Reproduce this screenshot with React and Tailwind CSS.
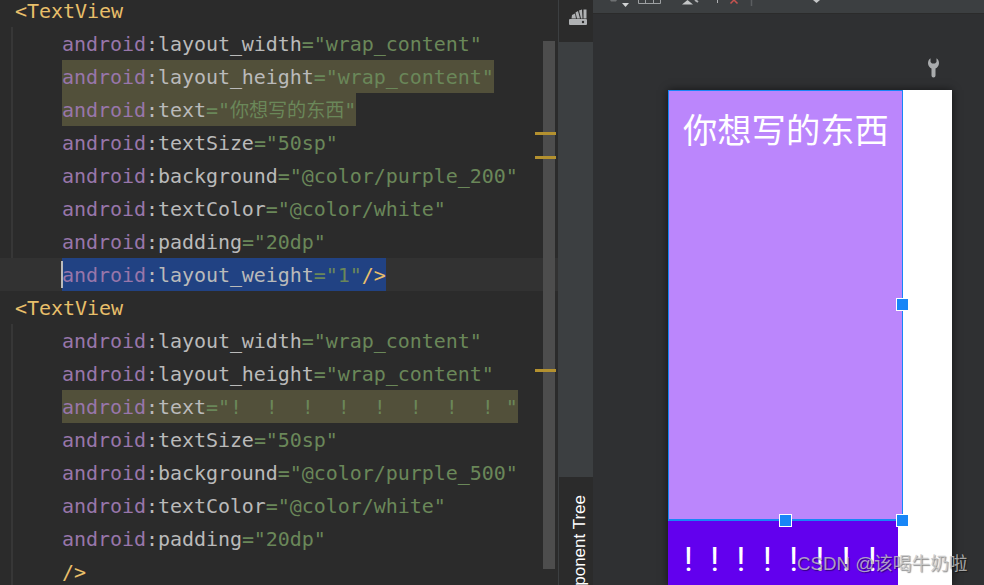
import React from "react";

const mono = "font-['DejaVu_Sans_Mono','Liberation_Mono','Noto_Sans_CJK_SC',monospace]";

const Attr = ({ name, value, tail }) => (
  <>
    <span className="text-[#9876aa]">android</span>
    <span className="text-[#bababa]">:{name}</span>
    <span className="text-[#6a8759]">="{value}"</span>
    {tail && <span className="text-[#e8bf6a]">{tail}</span>}
  </>
);

const Line = ({ children, indent = true, mark, current }) => (
  <div className={`h-[33px] leading-[35px] whitespace-pre ${current ? "bg-[#323232]" : ""} ${indent ? "pl-[62px]" : "pl-[15px]"}`}>
    {mark ? <span className={`inline-block h-[33px] align-top ${mark}`}>{children}</span> : children}
  </div>
);

const Handle = ({ className }) => (
  <div className={`absolute w-[13px] h-[13px] bg-[#1886f7] border-[1.5px] border-white ${className}`} />
);

const TextView = () => <span className="text-[#e8bf6a]">&lt;TextView</span>;

const Editor = () => (
  <div className={`relative w-[558px] h-[585px] overflow-hidden bg-[#2b2b2b] text-[20px] tracking-[-0.05px] ${mono}`}>
    <div className="-mt-[6px]">
      <Line indent={false}><TextView /></Line>
      <Line><Attr name="layout_width" value="wrap_content" /></Line>
      <Line mark="bg-[#52503a]"><Attr name="layout_height" value="wrap_content" /></Line>
      <Line mark="bg-[#52503a]">
        <span className="text-[#9876aa]">android</span>
        <span className="text-[#bababa]">:text</span>
        <span className="text-[#6a8759]">="<span className="text-[19.130px]">你想写的东西</span>"</span>
      </Line>
      <Line><Attr name="textSize" value="50sp" /></Line>
      <Line><Attr name="background" value="@color/purple_200" /></Line>
      <Line><Attr name="textColor" value="@color/white" /></Line>
      <Line><Attr name="padding" value="20dp" /></Line>
      <Line current mark="bg-[#214283]"><Attr name="layout_weight" value="1" tail="/>" /></Line>
      <Line indent={false}><TextView /></Line>
      <Line><Attr name="layout_width" value="wrap_content" /></Line>
      <Line><Attr name="layout_height" value="wrap_content" /></Line>
      <Line mark="bg-[#52503a]"><Attr name="text" value="!  !  !  !  !  !  !  ! " /></Line>
      <Line><Attr name="textSize" value="50sp" /></Line>
      <Line><Attr name="background" value="@color/purple_500" /></Line>
      <Line><Attr name="textColor" value="@color/white" /></Line>
      <Line><Attr name="padding" value="20dp" /></Line>
      <Line><span className="text-[#e8bf6a]">/&gt;</span></Line>
    </div>
    {/* indent guides */}
    <div className="absolute left-[11px] top-[27px] w-[2px] h-[231px] bg-[#373737]" />
    <div className="absolute left-[11px] top-[324px] w-[2px] h-[261px] bg-[#373737]" />
    {/* caret */}
    <div className="absolute left-[61px] top-[261px] w-[2px] h-[27px] bg-[#bbbbbb]" />
    {/* scrollbar + error stripes */}
    <div className="absolute left-[543px] top-[41px] w-[12px] h-[528px] bg-[#4d4d4d]" />
    <div className="absolute left-[535px] top-[132px] w-[21px] h-[3px] bg-[#b4912f]" />
    <div className="absolute left-[535px] top-[156px] w-[21px] h-[3px] bg-[#b4912f]" />
    <div className="absolute left-[535px] top-[369px] w-[21px] h-[3px] bg-[#b4912f]" />
  </div>
);

const ToolStrip = () => (
  <div className="w-[35px] h-[585px] flex flex-col bg-[#3c3f41] overflow-hidden">
    <div className="h-[42px] ml-[1px] bg-[#2b2b2b] pl-[10px] pt-[8px]">
      <svg width="18" height="18" viewBox="0 0 18 18" fill="#afb1b3">
        <rect x="0" y="11" width="18" height="6" rx="1" />
        <path d="M2.500 10.500 3 7l3-1.500 1 5z" />
        <path d="M8 10.500 6.500 4.500 9 3l2 7.500z" />
        <path d="M12 10.500 10 2.500 13 1.500 13.500 10.500z" />
        <path d="M14.500 10.500 14.500 1.500 17.500 1.500 17.500 10.500z" />
        <circle cx="14" cy="14" r="1.200" fill="#2b2b2b" />
      </svg>
    </div>
    <div className="flex-1" />
    <div className="h-[108px] ml-[1px] pl-[8px] bg-[#2b2b2b] overflow-hidden flex">
      <span className="self-start mt-[18px] [writing-mode:vertical-rl] rotate-180 whitespace-nowrap text-[17px] text-white font-['Liberation_Sans',sans-serif]">
        Component Tree
      </span>
    </div>
  </div>
);

const DesignToolbar = () => (
  <div className="h-[14px] bg-[#3c3f41] border-b border-[#2b2b2b] overflow-hidden">
    <svg width="391" height="13" viewBox="0 0 391 13">
      <path d="M17 0h7l-1 1.500h-5z" fill="#6e7173" />
      <path d="M29 3h7l-3.500 4z" fill="#d0d2d3" />
      <path d="M45.500 0v3.500h22V0M52.500 0v3M60.500 0v3" fill="none" stroke="#9da0a2" />
      <path d="M89 4.500l5.500-4.500 5.500 4.500z" fill="#c4c6c7" />
      <path d="M102 0l3 2" stroke="#afb1b3" strokeWidth="2" />
      <path d="M124.500 0v3" stroke="#afb1b3" />
      <path d="M141 0l-3.500 3.500M141 0l3.500 3.500" fill="none" stroke="#c75450" strokeWidth="1.500" />
      <path d="M158.500 0v6" stroke="#5b5e60" strokeWidth="1.500" />
      <path d="M220 0h7l-3.500 3z" fill="#c4c6c7" />
    </svg>
  </div>
);

const Phone = () => (
  <div className="relative w-[284px] flex-1 bg-white shadow-[0_0_8px_rgba(0,0,0,0.6)] font-['Roboto','Noto_Sans_CJK_SC',sans-serif] text-white">
    <div className="w-[235px] h-[431px] bg-[#bb86fc] border border-b-2 border-[#1886f7] pt-[17px] pl-[14px] text-[34.300px] leading-[46px] whitespace-nowrap">
      你想写的东西
    </div>
    <div className="w-[230px] h-[64px] bg-[#6200ee] flex gap-[19.300px] pl-[16px] pt-[15px] text-[34px] leading-[46px]">
      <span className="w-[7px]">!</span>
      <span className="w-[7px]">!</span>
      <span className="w-[7px]">!</span>
      <span className="w-[7px]">!</span>
      <span className="w-[7px]">!</span>
      <span className="w-[7px]">!</span>
      <span className="w-[7px]">!</span>
      <span className="w-[7px]">!</span>
    </div>
    <Handle className="left-[228px] top-[208px]" />
    <Handle className="left-[111px] top-[424px]" />
    <Handle className="left-[228px] top-[424px]" />
  </div>
);

const DesignPane = () => (
  <div className="relative flex-1 h-[585px] overflow-hidden flex flex-col bg-[#2f3032]">
    <DesignToolbar />
    <div className="flex-1 flex flex-col pl-[75px] min-h-0">
      <div className="h-[76px] pl-[258px] pt-[43px]">
        <svg width="15" height="21" viewBox="0 0 15 21" fill="#a9abad">
          <path d="M4.500 1.200V5l1.500 1.500h3L10.500 5V1.200A6 6 0 0 1 9.500 11.500V18.500a2 2 0 0 1-4 0V11.500A6 6 0 0 1 4.500 1.200z" />
        </svg>
      </div>
      <Phone />
    </div>
    <span className="absolute left-[204px] top-[552px] text-[18.700px] leading-[24px] text-[#c8c8c8]/80 [text-shadow:1px_1px_1px_rgba(0,0,0,0.45)] whitespace-nowrap font-['Liberation_Sans','Noto_Sans_CJK_SC',sans-serif]">
      CSDN @该喝牛奶啦
    </span>
  </div>
);

export default function App() {
  return (
    <div className="flex w-[984px] h-[585px] overflow-hidden">
      <Editor />
      <ToolStrip />
      <DesignPane />
    </div>
  );
}
